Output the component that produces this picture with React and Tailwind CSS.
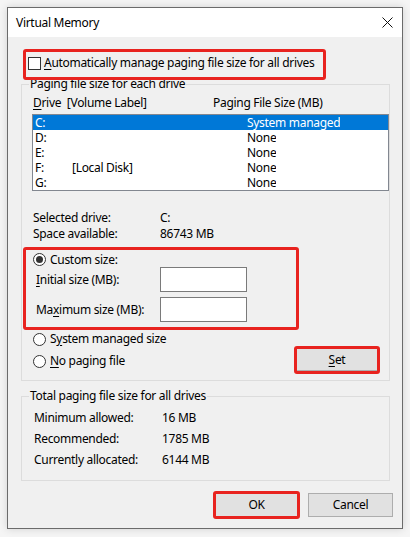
import React from "react";

const drives = [
  { d: "C:", label: "", size: "System managed", selected: true },
  { d: "D:", label: "", size: "None" },
  { d: "E:", label: "", size: "None" },
  { d: "F:", label: "[Local Disk]", size: "None" },
  { d: "G:", label: "", size: "None" },
];

const Radio = ({ checked }) => (
  <span className="w-[13px] h-[13px] rounded-full border border-[#333] bg-white flex items-center justify-center shrink-0">
    {checked && <span className="w-[7px] h-[7px] rounded-full bg-[#333]" />}
  </span>
);

const RedBox = ({ className }) => (
  <div className={`absolute border-[3px] border-[#e8231f] rounded-[3px] pointer-events-none ${className}`} />
);

const App = () => {
  return (
    <div
      className="w-[410px] h-[537px] bg-[#f5f5f5] pt-[7px] pl-[7px] text-[12px] tracking-[-0.3px] text-black overflow-hidden"
      style={{ fontFamily: '"Segoe UI", "Noto Sans", sans-serif' }}
    >
      <div className="relative w-[396px] border border-[#6b6b6b] bg-[#f0f0f0] shadow-[0_0_8px_rgba(0,0,0,0.15)]">
        {/* title bar */}
        <div className="h-[29px] bg-white flex items-center justify-between pl-[8px] pr-[9px]">
          <span className="text-[12px]">Virtual Memory</span>
          <svg width="11" height="11" viewBox="0 0 11 11">
            <path d="M0.5 0.5 L10.5 10.5 M10.5 0.5 L0.5 10.5" stroke="#111" strokeWidth="1" />
          </svg>
        </div>

        {/* auto manage */}
        <div className="mt-[18px] ml-[20px] h-[16px] flex items-center gap-[3px]">
          <span className="w-[13px] h-[13px] border border-[#333] bg-white shrink-0" />
          <span className="leading-[16px]">
            <u className="underline-offset-2">A</u>utomatically manage paging file size for all drives
          </span>
        </div>

        {/* paging file size for each drive */}
        <fieldset className="mt-[5px] ml-[13px] w-[369px] border border-[#dcdcdc] p-0 pb-[9px]">
          <legend className="ml-[7px] px-[1px] leading-[16px]">Paging file size for each drive</legend>

          <div className="mt-[3px] pl-[11px] flex h-[16px] leading-[16px]">
            <span className="w-[180px]">
              <u className="underline-offset-2">D</u>rive&nbsp; [Volume Label]
            </span>
            <span>Paging File Size (MB)</span>
          </div>

          <div className="mt-[3px] ml-[10px] w-[357px] border border-[#828790] bg-white">
            {drives.map((r) => (
              <div
                key={r.d}
                className={`h-[15px] leading-[15px] overflow-hidden flex pl-[2px] ${r.selected ? "bg-[#0078d7] text-white" : ""}`}
              >
                <span className="w-[37px] h-[15px] overflow-hidden">{r.d}</span>
                <span className="w-[175px] h-[15px] overflow-hidden">{r.label}</span>
                <span className="h-[15px] overflow-hidden">{r.size}</span>
              </div>
            ))}
          </div>

          <div className="mt-[19px] pl-[11px] flex leading-[16px]">
            <span className="w-[127px]">Selected drive:</span>
            <span>C:</span>
          </div>
          <div className="pl-[11px] flex leading-[16px]">
            <span className="w-[127px]">Space available:</span>
            <span>86743 MB</span>
          </div>

          <div className="mt-[10px] pl-[11px] h-[15px] flex items-center gap-[4px]">
            <Radio checked />
            <span className="leading-[15px]">Custom size:</span>
          </div>

          <div className="pl-[14px] flex items-center h-[25px]">
            <span className="w-[124px]">
              <u className="underline-offset-2">I</u>nitial size (MB):
            </span>
            <div className="w-[87px] h-[25px] border border-[#7a7a7a] bg-white" />
          </div>
          <div className="mt-[5px] pl-[14px] flex items-center h-[25px]">
            <span className="w-[124px]">
              Ma<u className="underline-offset-2">x</u>imum size (MB):
            </span>
            <div className="w-[87px] h-[25px] border border-[#7a7a7a] bg-white" />
          </div>

          <div className="mt-[9px] pl-[11px] h-[16px] flex items-center gap-[4px]">
            <Radio />
            <span className="leading-[16px]">
              S<u className="underline-offset-2">y</u>stem managed size
            </span>
          </div>

          <div className="mt-[1px] pl-[11px] pr-[11px] flex items-start justify-between">
            <div className="mt-[5px] h-[16px] flex items-center gap-[4px]">
              <Radio />
              <span className="leading-[16px]">
                <u className="underline-offset-2">N</u>o paging file
              </span>
            </div>
            <button className="w-[82px] h-[23px] bg-[#e1e1e1] border border-[#adadad] flex items-center justify-center">
              <span>
                <u className="underline-offset-2">S</u>et
              </span>
            </button>
          </div>
        </fieldset>

        {/* totals */}
        <fieldset className="mt-[7px] ml-[13px] w-[369px] border border-[#dcdcdc] p-0 pb-[10px]">
          <legend className="ml-[7px] px-[1px] leading-[16px]">Total paging file size for all drives</legend>
          <div className="mt-[3px] pl-[12px]">
            {[
              ["Minimum allowed:", "16 MB"],
              ["Recommended:", "1785 MB"],
              ["Currently allocated:", "6144 MB"],
            ].map(([k, v]) => (
              <div key={k} className="flex h-[21px] leading-[21px]">
                <span className="w-[128px]">{k}</span>
                <span>{v}</span>
              </div>
            ))}
          </div>
        </fieldset>

        <div className="mt-[12px] pb-[11px] pr-[9px] flex justify-end gap-[9px]">
          <button className="w-[85px] h-[24px] bg-[#e1e1e1] border border-[#0078d7]">OK</button>
          <button className="w-[85px] h-[24px] bg-[#e1e1e1] border border-[#adadad]">Cancel</button>
        </div>

        {/* annotation boxes */}
        <RedBox className="left-[15px] top-[41px] w-[303px] h-[31px]" />
        <RedBox className="left-[15px] top-[239px] w-[276px] h-[83px]" />
        <RedBox className="left-[286px] top-[338px] w-[86px] h-[28px]" />
        <RedBox className="left-[205px] top-[483px] w-[87px] h-[28px]" />
      </div>
    </div>
  );
};

export default App;
